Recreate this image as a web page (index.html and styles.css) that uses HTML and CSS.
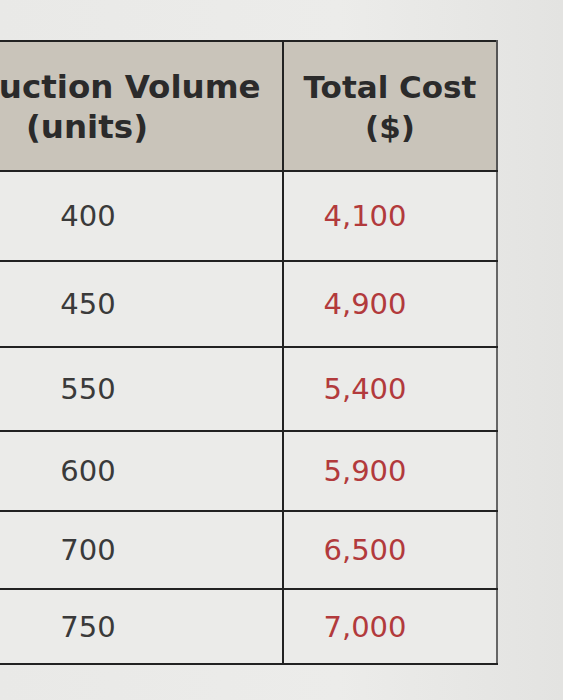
FILE: index.html
```html
<!DOCTYPE html>
<html>
<head>
<meta charset="utf-8">
<link rel="stylesheet" href="styles.css">
</head>
<body>
<div class="page">
  <table class="data">
    <thead>
      <tr class="head">
        <th class="c1">Production Volume<br>(units)</th>
        <th class="c2">Total Cost<br>($)</th>
      </tr>
    </thead>
    <tbody>
      <tr class="r1"><td class="vol">400</td><td class="cost">4,100</td></tr>
      <tr class="r2"><td class="vol">450</td><td class="cost">4,900</td></tr>
      <tr class="r3"><td class="vol">550</td><td class="cost">5,400</td></tr>
      <tr class="r4"><td class="vol">600</td><td class="cost">5,900</td></tr>
      <tr class="r5"><td class="vol">700</td><td class="cost">6,500</td></tr>
      <tr class="r6"><td class="vol">750</td><td class="cost">7,000</td></tr>
    </tbody>
  </table>
</div>
</body>
</html>
```
FILE: styles.css
```css
html, body {
  margin: 0;
  padding: 0;
}
body {
  background: #e8e8e6;
  font-family: "DejaVu Sans", Verdana, sans-serif;
  width: 563px;
  height: 700px;
  overflow: hidden;
}
.page {
  padding-top: 40px;
  overflow: hidden;
  height: 660px;
  background: linear-gradient(90deg, #e9e9e7 0%, #ececea 60%, #e3e3e1 100%);
}
.data {
  border-collapse: collapse;
  margin-left: -106px;
  table-layout: fixed;
}
.data th, .data td {
  border: 2px solid #222;
  padding: 0;
  text-align: center;
  vertical-align: middle;
}
.c1 { width: 382px; }
.c2 { width: 212px; }
.head th {
  height: 126px;
  background: #c9c4ba;
  color: #2b2b2b;
  font-weight: bold;
  font-size: 32.5px;
  line-height: 40px;
  padding-top: 2px;
}
.data th.c1 {
  padding-right: 4px;
}
.data th.c2 {
  border-right-color: #555;
  font-size: 31px;
}
.data td {
  background: #ebebe9;
  font-size: 29px;
}
.data td.vol {
  color: #3a3a3a;
  padding-right: 2px;
}
.data td.cost {
  border-right: 2px solid #666;
  padding-right: 50px;
  color: #b23a3c;
}
.r1 td { height: 88px; }
.r2 td { height: 84px; }
.r3 td { height: 82px; }
.r4 td { height: 78px; }
.r5 td { height: 76px; }
.r6 td { height: 73px; }
```
